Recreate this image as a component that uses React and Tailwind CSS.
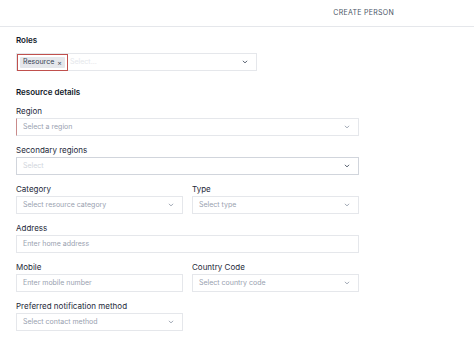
export default function App() {
  const Chevron = ({ dark }) => (
    <svg
      width="6"
      height="6"
      viewBox="0 0 10 10"
      className={dark ? "text-gray-600" : "text-gray-400"}
    >
      <path
        d="M2 3.5 L5 6.5 L8 3.5"
        fill="none"
        stroke="currentColor"
        strokeWidth="1.6"
        strokeLinecap="round"
        strokeLinejoin="round"
      />
    </svg>
  );

  const Field = ({ label, placeholder, chevron, className = "", boxClass = "", dark }) => (
    <div className={`flex flex-col ${className}`}>
      <div className="h-[10px] leading-[10px] text-[8px] text-gray-800">{label}</div>
      <div
        className={`mt-[2px] h-[18px] flex items-center justify-between pl-[6px] pr-[8px] bg-white border ${
          boxClass || "border-gray-200"
        }`}
      >
        <span className={`text-[7px] ${dark ? "text-gray-300" : "text-gray-400"}`}>
          {placeholder}
        </span>
        {chevron && <Chevron dark={dark} />}
      </div>
    </div>
  );

  return (
    <div
      className="w-[474px] h-[340px] bg-white overflow-hidden"
      style={{ fontFamily: "Inter, 'Noto Sans', sans-serif" }}
    >
      <div className="h-[27px] border-b border-gray-200 flex items-center justify-end pr-[80px]">
        <span className="text-[7px] tracking-[0.04em] text-gray-600 pt-[1px]">CREATE PERSON</span>
      </div>

      <div className="px-4">
        <div className="mt-[8px] h-[10px] leading-[10px] text-[8px] font-semibold text-gray-900">
          Roles
        </div>
        <div className="mt-[8px] w-[241px] h-[18px] border border-gray-200 flex items-center justify-between pr-[8px]">
          <div className="flex items-center h-full">
            <div className="h-[17px] w-[51px] border-[1.5px] border-[#c0504d] flex items-center justify-center">
              <div className="bg-gray-200 h-[11px] px-[3px] flex items-center gap-[3px] rounded-[1px]">
                <span className="text-[7px] text-gray-700">Resource</span>
                <span className="text-[7px] text-gray-600 leading-none">×</span>
              </div>
            </div>
            <span className="ml-[2px] text-[7px] text-gray-200">Select...</span>
          </div>
          <Chevron dark />
        </div>

        <div className="mt-[16px] h-[10px] leading-[10px] text-[8px] font-semibold text-gray-900">
          Resource details
        </div>

        <div className="mt-[9px] w-[343px] flex flex-col gap-[9px]">
          <Field
            label="Region"
            placeholder="Select a region"
            chevron
            boxClass="border-gray-200 border-l-[#c98b8b]"
          />
          <Field
            label="Secondary regions"
            placeholder="Select"
            chevron
            dark
            boxClass="border-gray-300"
          />
          <div className="grid grid-cols-2 gap-[9px]">
            <Field label="Category" placeholder="Select resource category" chevron />
            <Field label="Type" placeholder="Select type" chevron />
          </div>
          <Field label="Address" placeholder="Enter home address" />
          <div className="grid grid-cols-2 gap-[9px]">
            <Field label="Mobile" placeholder="Enter mobile number" />
            <Field label="Country Code" placeholder="Select country code" chevron />
          </div>
          <div className="grid grid-cols-2 gap-[9px]">
            <Field label="Preferred notification method" placeholder="Select contact method" chevron />
          </div>
        </div>
      </div>
    </div>
  );
}
